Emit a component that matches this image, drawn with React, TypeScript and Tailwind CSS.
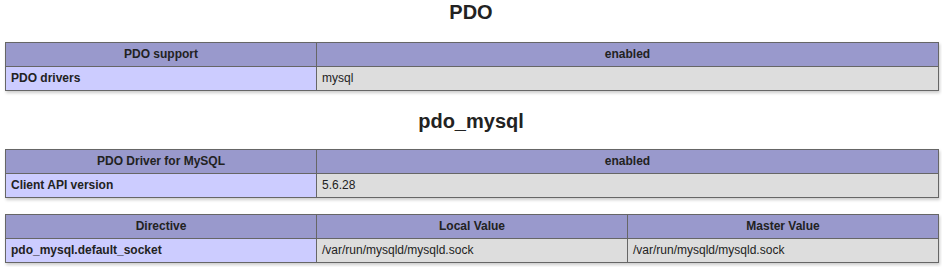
const font = { fontFamily: '"Liberation Sans", Arial, sans-serif' }

type Row = { cells: string[]; head?: boolean }

const sections: { title?: string; tables: Row[][] }[] = [
  {
    title: 'PDO',
    tables: [
      [
        { cells: ['PDO support', 'enabled'], head: true },
        { cells: ['PDO drivers', 'mysql'] },
      ],
    ],
  },
  {
    title: 'pdo_mysql',
    tables: [
      [
        { cells: ['PDO Driver for MySQL', 'enabled'], head: true },
        { cells: ['Client API version', '5.6.28'] },
      ],
      [
        { cells: ['Directive', 'Local Value', 'Master Value'], head: true },
        { cells: ['pdo_mysql.default_socket', '/var/run/mysqld/mysqld.sock', '/var/run/mysqld/mysqld.sock'] },
      ],
    ],
  },
]

function InfoTable({ rows, first }: { rows: Row[]; first: boolean }) {
  const cols = rows[0].cells.length
  return (
    <table
      className={`ml-[5px] w-[934px] table-fixed border-collapse shadow-[1px_2px_3px_#ccc] ${first ? '' : 'mt-[16px]'}`}
    >
      <colgroup>
        <col className="w-[311px]" />
        {cols === 3 ? (
          <>
            <col className="w-[311px]" />
            <col />
          </>
        ) : (
          <col />
        )}
      </colgroup>
      <tbody>
        {rows.map((r, i) => (
          <tr key={i}>
            {r.cells.map((c, j) =>
              r.head ? (
                <th
                  key={j}
                  className="border border-[#666] bg-[#99c] px-[5px] py-[4px] text-center text-[12px] font-bold leading-[15px] text-[#222]"
                >
                  {c}
                </th>
              ) : (
                <td
                  key={j}
                  className={`border border-[#666] px-[5px] py-[4px] text-left text-[12px] leading-[15px] text-[#222] ${
                    j === 0 ? 'bg-[#ccf] font-bold' : 'bg-[#ddd]'
                  }`}
                >
                  {c}
                </td>
              ),
            )}
          </tr>
        ))}
      </tbody>
    </table>
  )
}

export default function App() {
  return (
    <div className="h-[267px] w-[942px] overflow-hidden bg-white text-[#222]" style={font}>
      {sections.map((s, si) => (
        <div key={si}>
          <h2
            className={`text-center text-[20px] font-bold leading-[23px] ${
              si === 0 ? 'mt-[1px] mb-[18px]' : 'mt-[19px] mb-[16px]'
            }`}
          >
            {s.title}
          </h2>
          {s.tables.map((t, ti) => (
            <InfoTable key={ti} rows={t} first={ti === 0} />
          ))}
        </div>
      ))}
    </div>
  )
}
